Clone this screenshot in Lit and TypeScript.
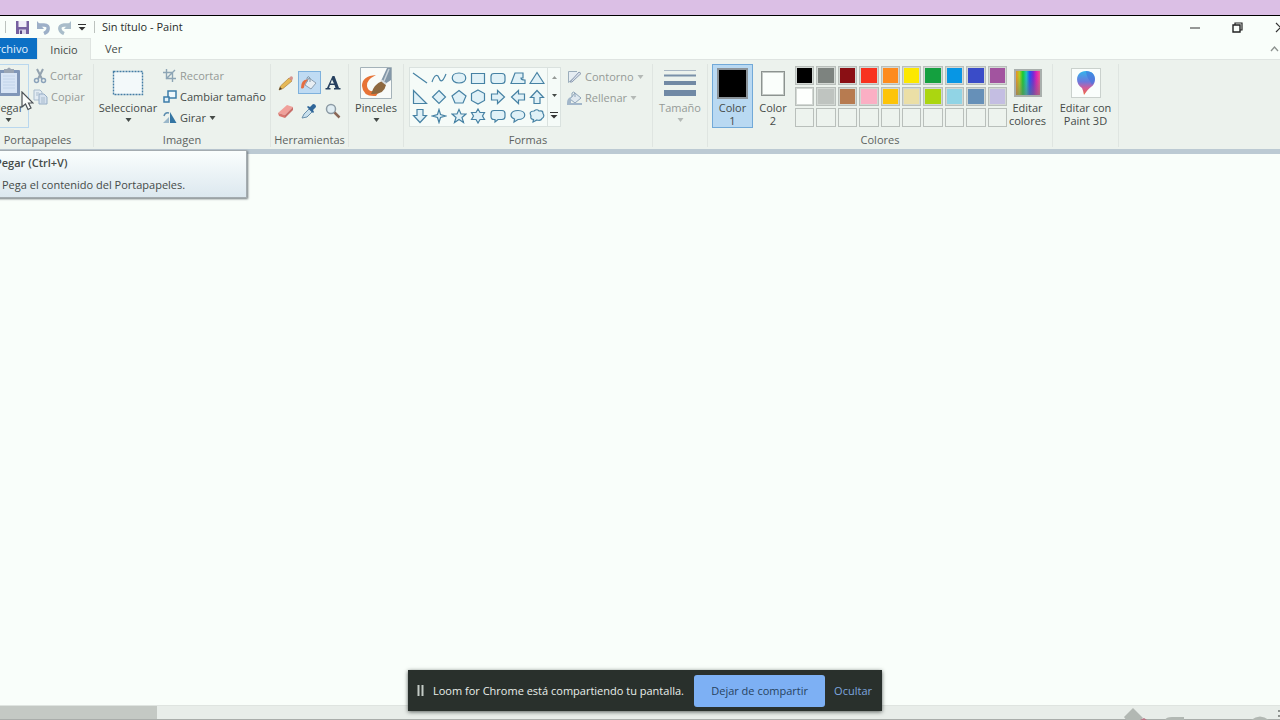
import { LitElement, html, css, svg } from "lit";
import { customElement } from "lit/decorators.js";

const palette = [
  ["Negro", "#000000"], ["Gris", "#7d837f"], ["Rojo oscuro", "#8a0f14"], ["Rojo", "#f8321f"], ["Naranja", "#fd8b1e"],
  ["Amarillo", "#fce800"], ["Verde", "#14a03f"], ["Turquesa", "#0796e4"], ["Añil", "#3a4cc8"], ["Púrpura", "#a2549f"],
  ["Blanco", "#fdfffd"], ["Gris claro", "#bfc4c0"], ["Marrón", "#b77b50"], ["Rosa", "#fbafc4"], ["Oro", "#fdc409"],
  ["Amarillo claro", "#ebdfa6"], ["Lima", "#abd610"], ["Turquesa claro", "#91d4e5"], ["Gris azulado", "#6690b8"], ["Lavanda", "#c4bee2"],
  ...Array.from({ length: 10 }, (_, i) => [`Personalizado ${i + 1}`, ""]),
];

const shapes: [string, string][] = [
  ["Línea", "M1 3 15 13"],
  ["Curva", "M1 12C4 3 7 5 8 8S11 14 15 4"],
  ["Elipse", "M8 3C17 3 17 13 8 13S-1 3 8 3Z"],
  ["Rectángulo", "M1.5 3.5h13v10h-13z"],
  ["Rectángulo redondeado", "M4 3.500h8q3 0 3 3v4q0 3-3 3H4q-3 0-3-3v-4q0-3 3-3z"],
  ["Polígono", "M5 3h8v5h-2q0 2 4 2v3.500H1z"],
  ["Triángulo", "M8 2.500 15 13.500H1z"],
  ["Triángulo rectángulo", "M1.500 1.500v13h13z"],
  ["Rombo", "M8 1.500 14.500 8 8 14.500 1.500 8z"],
  ["Pentágono", "M8 1.500 15 7l-3 7H4L1 7z"],
  ["Hexágono", "M8 1 14.500 4.500v7L8 15 1.500 11.500v-7z"],
  ["Flecha derecha", "M1.500 5h6V1.500L14.500 8l-7 6.500V11h-6z"],
  ["Flecha izquierda", "M14.500 5h-6V1.500L1.500 8l7 6.500V11h6z"],
  ["Flecha arriba", "M5 14.500v-6H1.500L8 1.500l6.500 7H11v6z"],
  ["Flecha abajo", "M5 1.500v6H1.500L8 14.500l6.500-7H11v-6z"],
  ["Estrella de 4 puntas", "M8 1.500 9.500 6.500 14.500 8 9.500 9.500 8 14.500 6.500 9.500 1.500 8 6.500 6.500z"],
  ["Estrella de 5 puntas", "M8 1.500 10 6h5l-4 3.500 1.500 5L8 11.500 3.500 14.500 5 9.500 1 6h5z"],
  ["Estrella de 6 puntas", "M8 1 10 4.500h4.500L12.500 8l2 3.500H10L8 15 6 11.500H1.500L3.500 8l-2-3.500H6z"],
  ["Llamada rectangular", "M4 2.500h8q3 0 3 3v3q0 3-3 3H8L5 14v-2.500H4q-3 0-3-3v-3q0-3 3-3z"],
  ["Llamada ovalada", "M8 2.500c9 0 9 9 0 9L4 14l.5-3C-1 9 0 2.500 8 2.500z"],
  ["Llamada de nube", "M5 3q3-2.500 5 0 4-1 4 2.500 2 3-1 5-1 2.500-5 1.500L4 14l.5-2.500Q1 11 2 8-.5 3 5 3z"],
];

const icon = (w: number, h: number, body: unknown) =>
  html`<svg width=${w} height=${h} viewBox="0 0 ${w} ${h}" fill="none" aria-hidden="true">${body}</svg>`;

const caret = html`<svg class="caret" width="7" height="4" viewBox="0 0 7 4" aria-hidden="true"><path d="M.5 0h6l-3 4z" fill="currentColor" /></svg>`;

const icons = {
  save: icon(15, 15, svg`<path d="M1 1h13v13H1z" fill="#76609f"/><path d="M3.500 1h8v6h-8z" fill="#f0edf8"/><path d="M4 9.500h7V14H4z" fill="#d9d3e8"/><path d="M5 10.500h2V14H5z" fill="#594783"/>`),
  undo: icon(15, 15, svg`<path d="M3 5h5q5 0 4 4.500Q11.500 12 8 13.500" stroke="#9db0c8" stroke-width="3.500"/><path d="M1 1v8h7z" fill="#9db0c8"/>`),
  redo: icon(15, 15, svg`<path d="M12 5H7Q2 5.500 3 9.500q.5 2.500 4 4" stroke="#a9bdca" stroke-width="3.500"/><path d="M14 1v8H7z" fill="#a9bdca"/>`),
  more: icon(8, 7, svg`<path d="M0 .5h8" stroke="#333"/><path d="M.5 3h7L4 6.500z" fill="#333"/>`),
  paste: icon(26, 32, svg`<rect x="2" y="3" width="22" height="26" rx="1" fill="#8096b8"/><path d="M5 6h16v20H5z" fill="#d7e4f5"/><path d="M7 9h12M7 12h12M7 15h12M7 18h12M7 21h12" stroke="#c2d4ea"/><path d="M8 2h3q2-3 4 0h3v4H8z" fill="#9aa5b4"/>`),
  cut: icon(14, 16, svg`<path d="M4 1l5 10M10 1 5 11" stroke="#93a2af" stroke-width="2"/><circle cx="3.500" cy="12.500" r="2" stroke="#8ba2ba" stroke-width="1.500"/><circle cx="10.500" cy="12.500" r="2" stroke="#8ba2ba" stroke-width="1.500"/>`),
  copy: icon(15, 16, svg`<path d="M1 1h6l2 2v8H1z" fill="#e3ecf3" stroke="#a9bccd"/><path d="M6 5h5l3 3v7H6z" fill="#d5e1ee" stroke="#96adc5"/><path d="M8 9h4M8 11h4M8 13h4M3 4h3M3 6h2" stroke="#a9bccd"/>`),
  select: icon(32, 26, svg`<path d="M1.500 1.500h29v23h-29z" fill="#f3f9fa" stroke="#447da4" stroke-width="1.400" stroke-dasharray="2 1"/>`),
  crop: icon(14, 13, svg`<path d="M3.500 0v9.500H13M0 3.500h9.500V13M3 10 12 1" stroke="#8da5b5" stroke-width="1.400"/>`),
  resize: icon(14, 13, svg`<path d="M5 1h8v7H5z" fill="#eff8fc" stroke="#3d7da9" stroke-width="1.500"/><path d="M1 7h5v5H1z" fill="#e2f1f9" stroke="#3d7da9" stroke-width="1.500"/>`),
  rotate: icon(14, 13, svg`<path d="M7 12V1l6.500 11z" fill="#3475a3"/><path d="M6 12V6L0 12z" fill="#9ab7ca"/><path d="M1 5q1-4 5-3" stroke="#5b8cae" stroke-width="1.500"/>`),
  pencil: icon(16, 16, svg`<path d="M1 15 2.500 11 11 3l3 3L5 13.500z" fill="#e6b955" stroke="#b0803a" stroke-width=".7"/><path d="m11 3 1.500-1.500q2-1 2.500 1.500L14 6z" fill="#d8938d"/><path d="m1 15 1-3 2 2z" fill="#473d30"/>`),
  fill: icon(18, 16, svg`<path d="m9 3 7 5-5 6-6-4z" fill="#e8eef3" stroke="#8da0b2"/><path d="M7 7V3q1-3 3 0v4" stroke="#8297a8"/><path d="M8 4.500Q1 4 1 13q3 2 3.500-3L6 7z" fill="#e56e42"/>`),
  text: icon(16, 16, svg`<path d="M7.500 1h2l4.500 12h1.500v1.500H9V13h1.500l-1-3H5L4 13h1.500v1.500H.5V13H2zM7 4.500 5.500 8.500H9z" fill="#26405f"/>`),
  eraser: icon(17, 14, svg`<path d="M1 9 10 1l6 2-8 8z" fill="#f0a09a"/><path d="m1 9 7 2v3l-6-2z" fill="#d97770"/><path d="m8 11 8-8v3l-8 8z" fill="#c86d68"/>`),
  dropper: icon(16, 16, svg`<path d="m1 15 2-4 5-5 3 3-5 5z" fill="#c9e0ed" stroke="#6b91ad"/><path d="m6 4 1-1 2 1 3-3q3 0 3 3l-3 3 1 2-1 1z" fill="#2f6699"/>`),
  zoom: icon(16, 16, svg`<circle cx="6" cy="6" r="4.500" fill="#e0edf3" stroke="#8c9ba5" stroke-width="1.500"/><path d="m9.500 9.500 5 5" stroke="#8a6757" stroke-width="2.500"/>`),
  brush: icon(32, 32, svg`<path d="M.5.5h31v31H.5z" fill="#f8fbf9" stroke="#a4b2b9"/><path d="M16 8Q2 9 2 19q1 11 14 10l4-6q-12 4-13-4-1-6 9-11z" fill="#e77336"/><path d="m21 14 6-13h4v12l-6 4z" fill="#8397a8"/><path d="m24 14 5-12" stroke="#c9d3da" stroke-width="1.500"/><path d="M11 27q3-10 11-13l4 4q-2 10-15 9z" fill="#8e6940"/><path d="m21 13 5 4" stroke="#d6dce0" stroke-width="2"/>`),
  outline: icon(15, 14, svg`<path d="M10 1.500H1.500v11L12 4" stroke="#9badbb" fill="#e6edf2"/><path d="m3 12 9-10 2 1.500L5 12z" fill="#d8e0ea" stroke="#8d9cb2"/>`),
  bucket: icon(15, 14, svg`<path d="m8 2 6 5-6 5-5-4z" fill="#dfe8ef" stroke="#8fa5b9"/><path d="M5 6V2q2-2 3 0v4" stroke="#8fa5b9"/><path d="M0 12h15v2H0zM0 12q0-5 4-6v6z" fill="#a3b7ca"/>`),
  sizes: icon(32, 28, svg`<path d="M0 1.500h32" stroke="#a9b7c4"/><path d="M0 6.500h32" stroke="#7990a8" stroke-width="2"/><path d="M0 14h32" stroke="#7189a4" stroke-width="4"/><path d="M0 24h32" stroke="#7089a5" stroke-width="6"/>`),
  minimize: icon(11, 11, svg`<path d="M1 6h10" stroke="#333"/>`),
  restore: icon(11, 11, svg`<path d="M3 3V1h7v7H8" stroke="#222" stroke-width="1.200"/><path d="M1 3h7v7H1z" stroke="#222" stroke-width="1.400"/>`),
  close: icon(11, 11, svg`<path d="m1 1 9 9M10 1l-9 9" stroke="#333" stroke-width="1.200"/>`),
  collapse: icon(9, 6, svg`<path d="m1 5 3.500-4L8 5" stroke="#8c918e" stroke-width="1.300"/>`),
};

@customElement("app-root")
export class AppRoot extends LitElement {
  static styles = css`
    :host {
      display: flex;
      flex-direction: column;
      height: 100vh;
      overflow: hidden;
      position: relative;
      background: #f9fefa;
      color: #454b48;
      font: 11px/14px "Open Sans", "Noto Sans", sans-serif;
    }
    * { box-sizing: border-box; }
    svg { display: block; flex: none; }
    button {
      font: inherit;
      color: inherit;
      background: none;
      border: 0;
      padding: 0;
      margin: 0;
      white-space: nowrap;
    }
    .backdrop { height: 16px; flex: none; background: #dbbfe5; border-bottom: 1px solid #000; }
    .window { flex: 1; display: flex; flex-direction: column; margin-left: -18px; min-height: 0; position: relative; }
    .titlebar { display: flex; align-items: center; height: 22px; padding-left: 23px; color: #282d2a; }
    .quick { display: flex; align-items: center; gap: 6px; padding: 0 8px 0 9px; border: solid #bcc2be; border-width: 0 1px; height: 12px; }
    .title { flex: 1; margin: 0; padding-left: 7px; font: inherit; font-weight: 500; }
    .controls { display: flex; align-items: center; gap: 32px; margin-right: -6px; }
    .tabs { display: flex; height: 22px; align-items: stretch; border-bottom: 1px solid #dfe4e1; }
    .tab { padding: 0 14px; }
    .tab-file { width: 55px; padding: 0 9px 0 0; text-align: right; background: #0c70c5; color: #e7f3ff; }
    .tab-active { width: 54px; padding: 0; background: #ecf2ed; border: 1px solid #dfe4e1; border-bottom: 0; margin-bottom: -1px; }
    .collapse { margin-left: auto; padding: 0 1px; }
    .ribbon { display: flex; height: 94px; flex: none; background: #ecf2ed; border-bottom: 5px solid #bccad3; padding: 4px 0 2px; }
    .group { display: flex; flex-direction: column; justify-content: space-between; flex: none; border-right: 1px solid #dfe5e1; }
    .group-name { margin: 0; font: inherit; text-align: center; height: 14px; color: #5c625f; }
    .body { display: flex; align-items: flex-start; }
    .clipboard { width: 112px; }
    .clipboard .body { padding-left: 6px; gap: 4px; }
    .image { width: 177px; }
    .image .body { padding-left: 6px; gap: 7px; }
    .tools { width: 78px; }
    .tools .body { padding: 7px 3px 0; }
    .brushes { width: 55px; }
    .brushes .body, .size .body, .three-d .body { justify-content: center; }
    .forms { width: 249px; }
    .forms .body { padding: 3px 5px 0; gap: 6px; }
    .forms .list { margin-top: -2px; }
    .size { width: 55px; }
    .colors { width: 345px; }
    .colors .body { padding-left: 4px; }
    .three-d { width: 66px; }
    .big { display: flex; flex-direction: column; align-items: center; width: 56px; height: 64px; padding-top: 3px; line-height: 13px; white-space: normal; }
    .glyph { display: flex; align-items: center; justify-content: center; height: 32px; margin-bottom: 2px; }
    .big .caret { margin-top: 4px; }
    .muted .caret { color: #b4b9b6; }
    .paste { width: 41px; border: 1px solid #b9d7ee; padding-top: 2px; }
    .list { display: flex; flex-direction: column; padding-top: 1px; }
    .row { display: flex; align-items: center; gap: 3px; height: 21px; }
    .muted { color: #959a97; }
    .tool-grid { display: grid; grid-template-columns: repeat(3, 1fr); width: 100%; row-gap: 5px; }
    .tool { display: flex; align-items: center; justify-content: center; height: 23px; }
    .tool-on { background: #bfdbf3; border: 1px solid #7eb1dd; }
    .gallery { display: flex; width: 152px; height: 60px; border: 1px solid #dae2df; background: #f5fbf8; }
    .shape-grid { flex: 1; display: grid; grid-template-columns: repeat(7, 1fr); grid-template-rows: repeat(3, 1fr); }
    .shape { display: grid; place-items: center; }
    .scroll { display: flex; flex-direction: column; justify-content: space-around; align-items: center; width: 13px; border-left: 1px solid #dae2df; }
    .swatch { width: 40px; }
    .swatch-on { width: 41px; background: #b9d9f2; border: 1px solid #71a9d8; padding-top: 2px; }
    .chip { border: 1px solid #8c9390; outline: 1px solid #c4cac6; outline-offset: -2px; }
    .chip-one { width: 31px; height: 31px; background: #000; border: 2px solid #8a9298; outline: 0; }
    .chip-two { width: 24px; height: 25px; background: #fafefb; }
    .palette { display: grid; grid-template-columns: repeat(10, 1fr); gap: 2px; width: 212px; margin: 2px 0 0 2px; }
    .cell { height: 19px; border: 1px solid #b9bfbb; background-color: #edf3ee; }
    .cell-fill { display: block; height: 100%; border: 1px solid #d3d8d4; }
    .edit { width: 41px; }
    .spectrum { width: 28px; height: 28px; border: 2px solid #a9afac; background: linear-gradient(transparent 20%, #73777588), linear-gradient(90deg, #ed8d25, #b2cc22, #16c833, #20c5bc, #2451f4, #7429d6, #dd22b3, #ee588c); }
    .paint-tile { width: 30px; height: 30px; display: grid; place-items: center; background: #fafefc; border: 1px solid #cad1cd; }
    .canvas { flex: 1; }
    .hscroll { height: 15px; flex: none; display: flex; background: #e8ede9; border-bottom: 1px solid #a9adaa; border-top: 1px solid #dfe4e0; }
    .thumb { width: 175px; background: #c4c9c4; }
    .watermark { margin-left: auto; overflow: hidden; }
    .tooltip { position: absolute; top: 134px; left: 6px; width: 259px; height: 48px; padding: 5px 6px; border: 1px solid #a4acb0; box-shadow: 1px 1px 2px #70797d; background: linear-gradient(#fafefd, #dce8ef); display: flex; flex-direction: column; gap: 8px; }
    .tooltip-title { font-weight: 600; }
    .tooltip-text { padding-left: 7px; }
    .cursor { position: absolute; left: 38px; top: 75px; }
    .share-layer { position: absolute; inset: auto 0 9px 0; display: flex; justify-content: center; padding-left: 10px; }
    .share { display: flex; align-items: center; width: 474px; height: 41px; padding: 0 10px 0 9px; background: #29302c; color: #e8eeea; box-shadow: 0 1px 4px #5a605d; }
    .share-text { flex: 1; padding-left: 9px; white-space: nowrap; }
    .stop { width: 131px; height: 32px; border-radius: 3px; background: #7db0f4; color: #27435f; font-weight: 500; }
    .hide { color: #7da6df; padding-left: 9px; }
  `;

  private row(label: string, glyph: unknown, muted = false, menu = false) {
    return html`<button class="row ${muted ? "muted" : ""}">${glyph}<span>${label}</span>${menu ? caret : ""}</button>`;
  }

  private tool(label: string, glyph: unknown, on = false) {
    return html`<button class="tool ${on ? "tool-on" : ""}" aria-label=${label}>${glyph}</button>`;
  }

  private group(kind: string, name: string, body: unknown) {
    return html`<section class="group ${kind}"><div class="body">${body}</div><h2 class="group-name">${name}</h2></section>`;
  }

  render() {
    return html`
      <div class="backdrop"></div>
      <main class="window">
        <header class="titlebar">
          <div class="quick">
            <button aria-label="Guardar">${icons.save}</button>
            <button aria-label="Deshacer">${icons.undo}</button>
            <button aria-label="Rehacer">${icons.redo}</button>
            <button aria-label="Personalizar">${icons.more}</button>
          </div>
          <h1 class="title">Sin título - Paint</h1>
          <div class="controls">
            <button aria-label="Minimizar">${icons.minimize}</button>
            <button aria-label="Restaurar">${icons.restore}</button>
            <button aria-label="Cerrar">${icons.close}</button>
          </div>
        </header>
        <nav class="tabs">
          <button class="tab tab-file">Archivo</button>
          <button class="tab tab-active">Inicio</button>
          <button class="tab">Ver</button>
          <button class="collapse" aria-label="Contraer la cinta">${icons.collapse}</button>
        </nav>
        <div class="ribbon">
          ${this.group("clipboard", "Portapapeles", html`
            <button class="big paste"><span class="glyph">${icons.paste}</span>Pegar${caret}</button>
            <div class="list">${this.row("Cortar", icons.cut, true)}${this.row("Copiar", icons.copy, true)}</div>`)}
          ${this.group("image", "Imagen", html`
            <button class="big"><span class="glyph">${icons.select}</span>Seleccionar${caret}</button>
            <div class="list">${this.row("Recortar", icons.crop, true)}${this.row("Cambiar tamaño", icons.resize)}${this.row("Girar", icons.rotate, false, true)}</div>`)}
          ${this.group("tools", "Herramientas", html`<div class="tool-grid">
            ${this.tool("Lápiz", icons.pencil)}${this.tool("Relleno", icons.fill, true)}${this.tool("Texto", icons.text)}
            ${this.tool("Borrador", icons.eraser)}${this.tool("Selector de color", icons.dropper)}${this.tool("Lupa", icons.zoom)}
          </div>`)}
          ${this.group("brushes", "", html`<button class="big"><span class="glyph">${icons.brush}</span>Pinceles${caret}</button>`)}
          ${this.group("forms", "Formas", html`
            <div class="gallery">
              <div class="shape-grid">
                ${shapes.map(([name, d]) => html`<button class="shape" aria-label=${name}>${icon(16, 16, svg`<path d=${d} fill=${name === "Línea" || name === "Curva" ? "none" : "#e0f1f7"} stroke="#4682a4" stroke-width="1.200"/>`)}</button>`)}
              </div>
              <div class="scroll">
                <button class="muted" aria-label="Subir">${icon(5, 3, svg`<path d="M0 3h5L2.500 0z" fill="currentColor"/>`)}</button>
                <button aria-label="Bajar">${icon(5, 3, svg`<path d="M0 0h5L2.500 3z" fill="currentColor"/>`)}</button>
                <button aria-label="Más formas">${icons.more}</button>
              </div>
            </div>
            <div class="list">${this.row("Contorno", icons.outline, true, true)}${this.row("Rellenar", icons.bucket, true, true)}</div>`)}
          ${this.group("size", "", html`<button class="big muted"><span class="glyph">${icons.sizes}</span>Tamaño${caret}</button>`)}
          ${this.group("colors", "Colores", html`
            <button class="big swatch-on"><span class="glyph"><span class="chip chip-one"></span></span>Color<br />1</button>
            <button class="big swatch"><span class="glyph"><span class="chip chip-two"></span></span>Color<br />2</button>
            <div class="palette">
              ${palette.map(([name, color]) => html`<button class="cell" aria-label=${name}>${color ? html`<span class="cell-fill" style="background:${color}"></span>` : ""}</button>`)}
            </div>
            <button class="big edit"><span class="glyph"><span class="spectrum"></span></span>Editar colores</button>`)}
          ${this.group("three-d", "", html`<button class="big"><span class="glyph"><span class="paint-tile">${icon(18, 24, svg`
            <defs><linearGradient id="drop" x1="0" y1="0" x2="0" y2="1"><stop offset="0" stop-color="#32b5ec"/><stop offset=".45" stop-color="#6d78dc"/><stop offset=".7" stop-color="#cf5e9d"/><stop offset="1" stop-color="#f06a3b"/></linearGradient></defs>
            <path d="M9 0C20 0 20 12 14 16q-3 2-7 8-1-5-2-7C-3 12-1 0 9 0z" fill="url(#drop)"/><path d="M9 0c9 0 11 9 6 14-2-5-5-6-6-14z" fill="#4275dc" opacity=".6"/>`)}</span></span>Editar con Paint 3D</button>`)}
        </div>
        <div class="canvas"></div>
        <div class="hscroll">
          <div class="thumb"></div>
          <svg class="watermark" width="160" height="14" viewBox="0 0 160 14" aria-hidden="true">
            <path d="m13 2 10 10-4 3H7l-3-4z" fill="#b2b8b3" /><path d="m20 14 4-2 3 2z" fill="#b97887" />
            <path d="M45 14q1-3 7-3h12v3z" fill="#b2b8b3" /><path d="M131 14q9-7 18 0z" fill="#b2b8b3" />
            <path d="M158 4h2v2h-2zM158 9h2v2h-2z" fill="#8d928e" />
          </svg>
        </div>
        <div class="tooltip" role="tooltip">
          <span class="tooltip-title">Pegar (Ctrl+V)</span>
          <span class="tooltip-text">Pega el contenido del Portapapeles.</span>
        </div>
        <svg class="cursor" width="14" height="20" viewBox="0 0 14 20" aria-hidden="true">
          <path d="M2 1v15l3.500-3 2.500 5.500 3-1.500-2.500-5H13z" fill="#fafcfb" stroke="#4b5055" stroke-width="1.200" />
        </svg>
      </main>
      <div class="share-layer">
        <aside class="share">
          ${icon(7, 11, svg`<path d="M1.500 0v11M5.500 0v11" stroke="#c3cac5" stroke-width="2"/>`)}
          <span class="share-text">Loom for Chrome está compartiendo tu pantalla.</span>
          <button class="stop">Dejar de compartir</button>
          <button class="hide">Ocultar</button>
        </aside>
      </div>
    `;
  }
}
